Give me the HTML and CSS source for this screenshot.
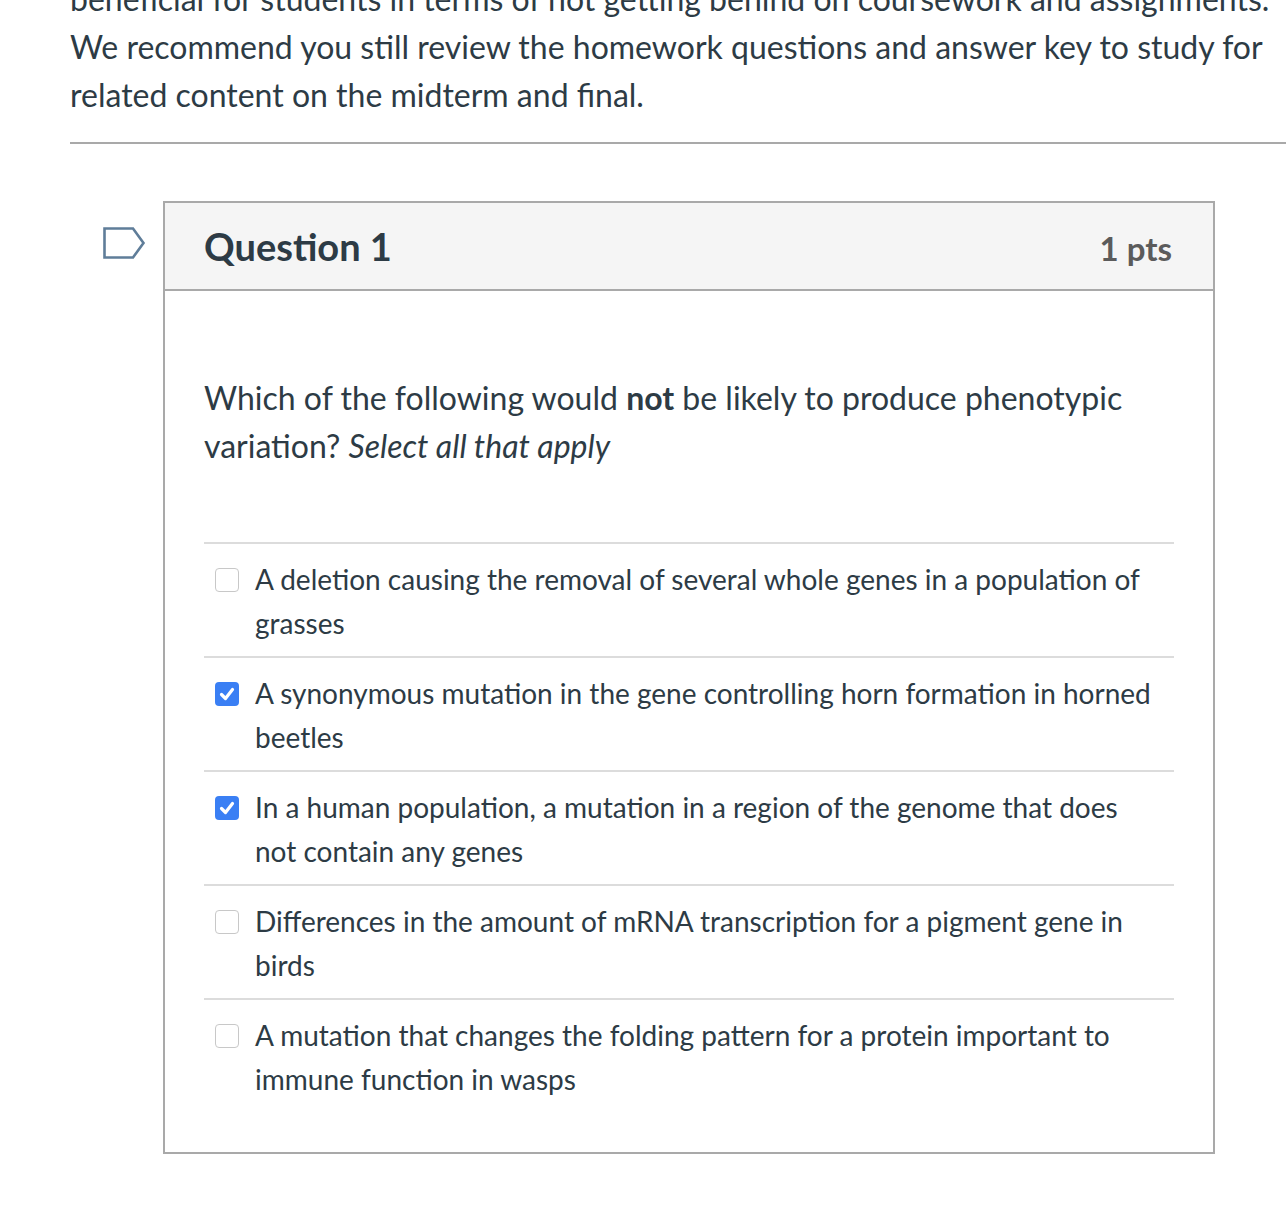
FILE: index.html
```html
<!DOCTYPE html>
<html>
<head>
<meta charset="utf-8">
<link rel="stylesheet" href="styles.css">
</head>
<body>
<div class="content">
  <p class="intro">beneficial for students in terms of not getting behind on coursework and assignments. We recommend you still review the homework questions and answer key to study for related content on the midterm and final.</p>
  <hr class="rule">
  <div class="qrow">
    <div class="flag">
      <svg width="44" height="34" viewBox="0 0 44 34">
        <path d="M2.5 2.5 H31 L41.5 17 L31 31.5 H2.5 Z" fill="#fff" stroke="#5f7d99" stroke-width="2.6" stroke-linejoin="miter"/>
      </svg>
    </div>
    <div class="qbox">
      <div class="qhead">
        <span class="qtitle">Question 1</span>
        <span class="qpts">1 pts</span>
      </div>
      <div class="qbody">
        <p class="qtext">Which of the following would <strong>not</strong> be likely to produce phenotypic variation? <em>Select all that apply</em></p>
        <div class="answers">
          <div class="answer">
            <span class="cb"></span>
            <span class="atext">A deletion causing the removal of several whole genes in a population of grasses</span>
          </div>
          <div class="answer">
            <span class="cb checked"><svg width="24" height="24" viewBox="0 0 24 24"><path d="M6.5 12.5 L10.5 16.5 L17.5 7.5" fill="none" stroke="#fff" stroke-width="3.2" stroke-linecap="round" stroke-linejoin="round"/></svg></span>
            <span class="atext">A synonymous mutation in the gene controlling horn formation in horned beetles</span>
          </div>
          <div class="answer">
            <span class="cb checked"><svg width="24" height="24" viewBox="0 0 24 24"><path d="M6.5 12.5 L10.5 16.5 L17.5 7.5" fill="none" stroke="#fff" stroke-width="3.2" stroke-linecap="round" stroke-linejoin="round"/></svg></span>
            <span class="atext">In a human population, a mutation in a region of the genome that does not contain any genes</span>
          </div>
          <div class="answer">
            <span class="cb"></span>
            <span class="atext">Differences in the amount of mRNA transcription for a pigment gene in birds</span>
          </div>
          <div class="answer">
            <span class="cb"></span>
            <span class="atext">A mutation that changes the folding pattern for a protein important to immune function in wasps</span>
          </div>
        </div>
      </div>
    </div>
  </div>
</div>
</body>
</html>
```

FILE: styles.css
```css
html, body {
  margin: 0;
  padding: 0;
  background: #fff;
  overflow: hidden;
}
body {
  font-family: Lato, "Noto Sans", sans-serif;
  color: #2d3b45;
}
.content {
  padding-left: 70px;
  width: 1216px;
}
.intro {
  margin: -25px 0 0 0;
  font-size: 32px;
  line-height: 48px;
}
.rule {
  margin: 23px 0 0 0;
  border: 0;
  height: 2px;
  background: #a9a9a9;
}
.qrow {
  display: flex;
  align-items: flex-start;
  margin-top: 57px;
}
.flag {
  width: 93px;
  padding-left: 32px;
  padding-top: 25px;
  box-sizing: border-box;
  flex: none;
}
.flag svg {
  display: block;
}
.qbox {
  width: 1052px;
  box-sizing: border-box;
  border: 2px solid #a9a9a9;
}
.qhead {
  height: 88px;
  box-sizing: border-box;
  background: #f5f5f5;
  border-bottom: 2px solid #a9a9a9;
  display: flex;
  align-items: center;
  justify-content: space-between;
  padding: 0 41px 0 39px;
}
.qtitle {
  font-size: 38px;
  font-weight: 700;
  color: #2d3b45;
}
.qpts {
  font-size: 33px;
  font-weight: 700;
  color: #5b5b5b;
  padding-top: 4px;
}
.qbody {
  padding: 83px 39px 40px 39px;
}
.qtext {
  margin: 0;
  font-size: 32px;
  line-height: 48px;
}
.qtext strong {
  font-weight: 700;
}
.answers {
  margin-top: 72px;
}
.answer {
  display: flex;
  align-items: flex-start;
  border-top: 2px solid #dcdcdc;
  padding: 13px 14px 11px 0;
}
.cb {
  flex: none;
  width: 24px;
  height: 24px;
  box-sizing: border-box;
  margin: 11px 16px 0 11px;
  border: 1.5px solid #c8c8c8;
  border-radius: 4px;
  background: #fff;
}
.cb.checked {
  border: 0;
  background: #3a7ff4;
}
.cb svg {
  display: block;
}
.atext {
  font-size: 28px;
  line-height: 44px;
}
```
